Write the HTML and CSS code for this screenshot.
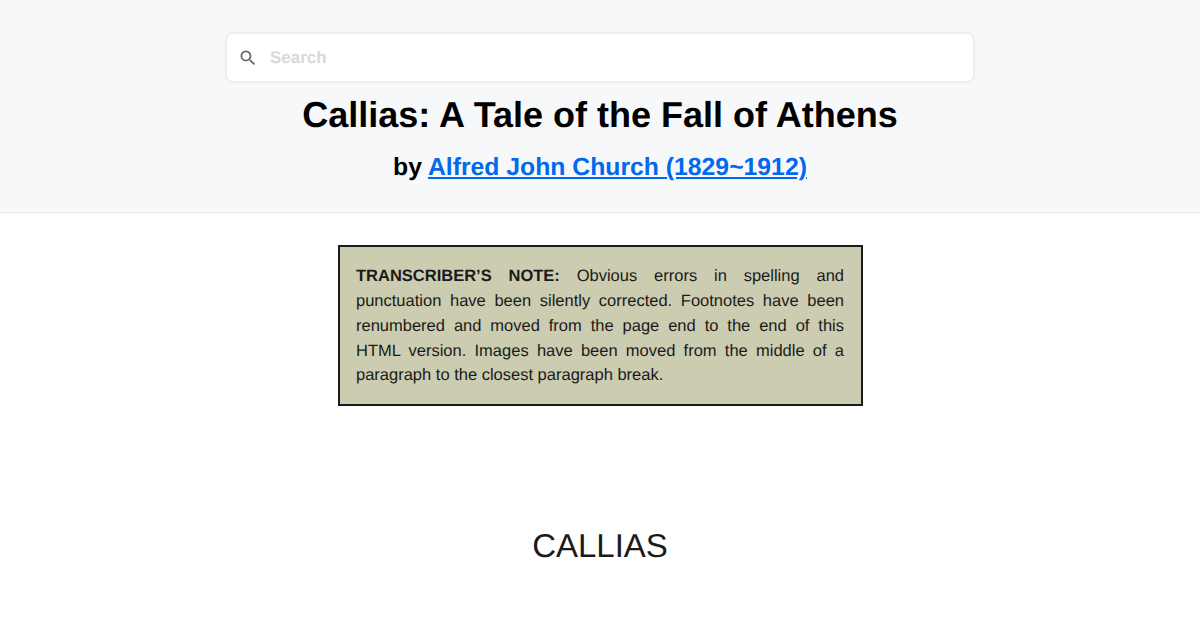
FILE: index.html
```html
<!DOCTYPE html>
<html lang="en">
<head>
<meta charset="utf-8">
<title>Callias: A Tale of the Fall of Athens</title>
<link rel="stylesheet" href="styles.css">
</head>
<body>
<header class="hero">
  <div class="search">
    <svg class="search-icon" viewBox="0 0 24 24" width="20" height="20" aria-hidden="true"><path d="M15.5 14h-.79l-.28-.27A6.47 6.47 0 0 0 16 9.5 6.5 6.5 0 1 0 9.5 16c1.61 0 3.09-.59 4.23-1.57l.27.28v.79l5 4.99L20.49 19l-4.99-5zm-6 0C7.01 14 5 11.99 5 9.5S7.01 5 9.5 5 14 7.01 14 9.5 11.99 14 9.5 14z"/></svg>
    <span class="search-text">Search</span>
  </div>
  <h1 class="title">Callias: A Tale of the Fall of Athens</h1>
  <p class="byline">by <a href="#">Alfred John Church (1829~1912)</a></p>
</header>
<main class="content">
  <div class="note"><p><b>TRANSCRIBER’S NOTE:</b> Obvious errors in spelling and punctuation have been silently corrected. Footnotes have been renumbered and moved from the page end to the end of this HTML version. Images have been moved from the middle of a paragraph to the closest paragraph break.</p></div>
  <h2 class="book">CALLIAS</h2>
</main>
</body>
</html>
```
FILE: styles.css
```css
* { box-sizing: border-box; }
html, body { margin: 0; padding: 0; }
body { font-family: "Liberation Sans", Arial, sans-serif; background: #fff; color: #1a1a1a; height: 628px; overflow: hidden; text-rendering: geometricPrecision; }
.hero { background: #f7f8fa; border-bottom: 1px solid #e2e4e8; height: 213px; padding-top: 32px; display: flex; flex-direction: column; align-items: center; }
.search { width: 750px; height: 51px; background: #fff; border: 2px solid #eceef1; border-radius: 8px; display: flex; align-items: center; padding-left: 11px; gap: 12px; }
.search-icon { fill: #666; flex: none; }
.search-text { font-size: 17px; font-weight: 700; color: #d8d8d8; }
.title { margin: 9px 0 0; font-size: 36px; line-height: 46px; font-weight: 700; color: #000; }
.byline { margin: 15px 0 0; font-size: 24.75px; line-height: 30px; font-weight: 700; color: #000; }
.byline a { color: #0069ed; text-decoration: underline; }
.content { display: flex; flex-direction: column; align-items: center; padding-top: 32px; }
.note { width: 525px; height: 161px; margin-left: 1px; background: #ccccb0; border: 2px solid #1a1a1a; padding: 16px 17px 16px 16px; }
.note p { margin: 0; padding-top: 1.3px; font-size: 16.5px; line-height: 24.75px; text-align: justify; color: #1a1a1a; }
.book { margin: 118px 0 0; font-size: 33px; line-height: 44px; font-weight: 400; color: #1a1a1a; }
```
